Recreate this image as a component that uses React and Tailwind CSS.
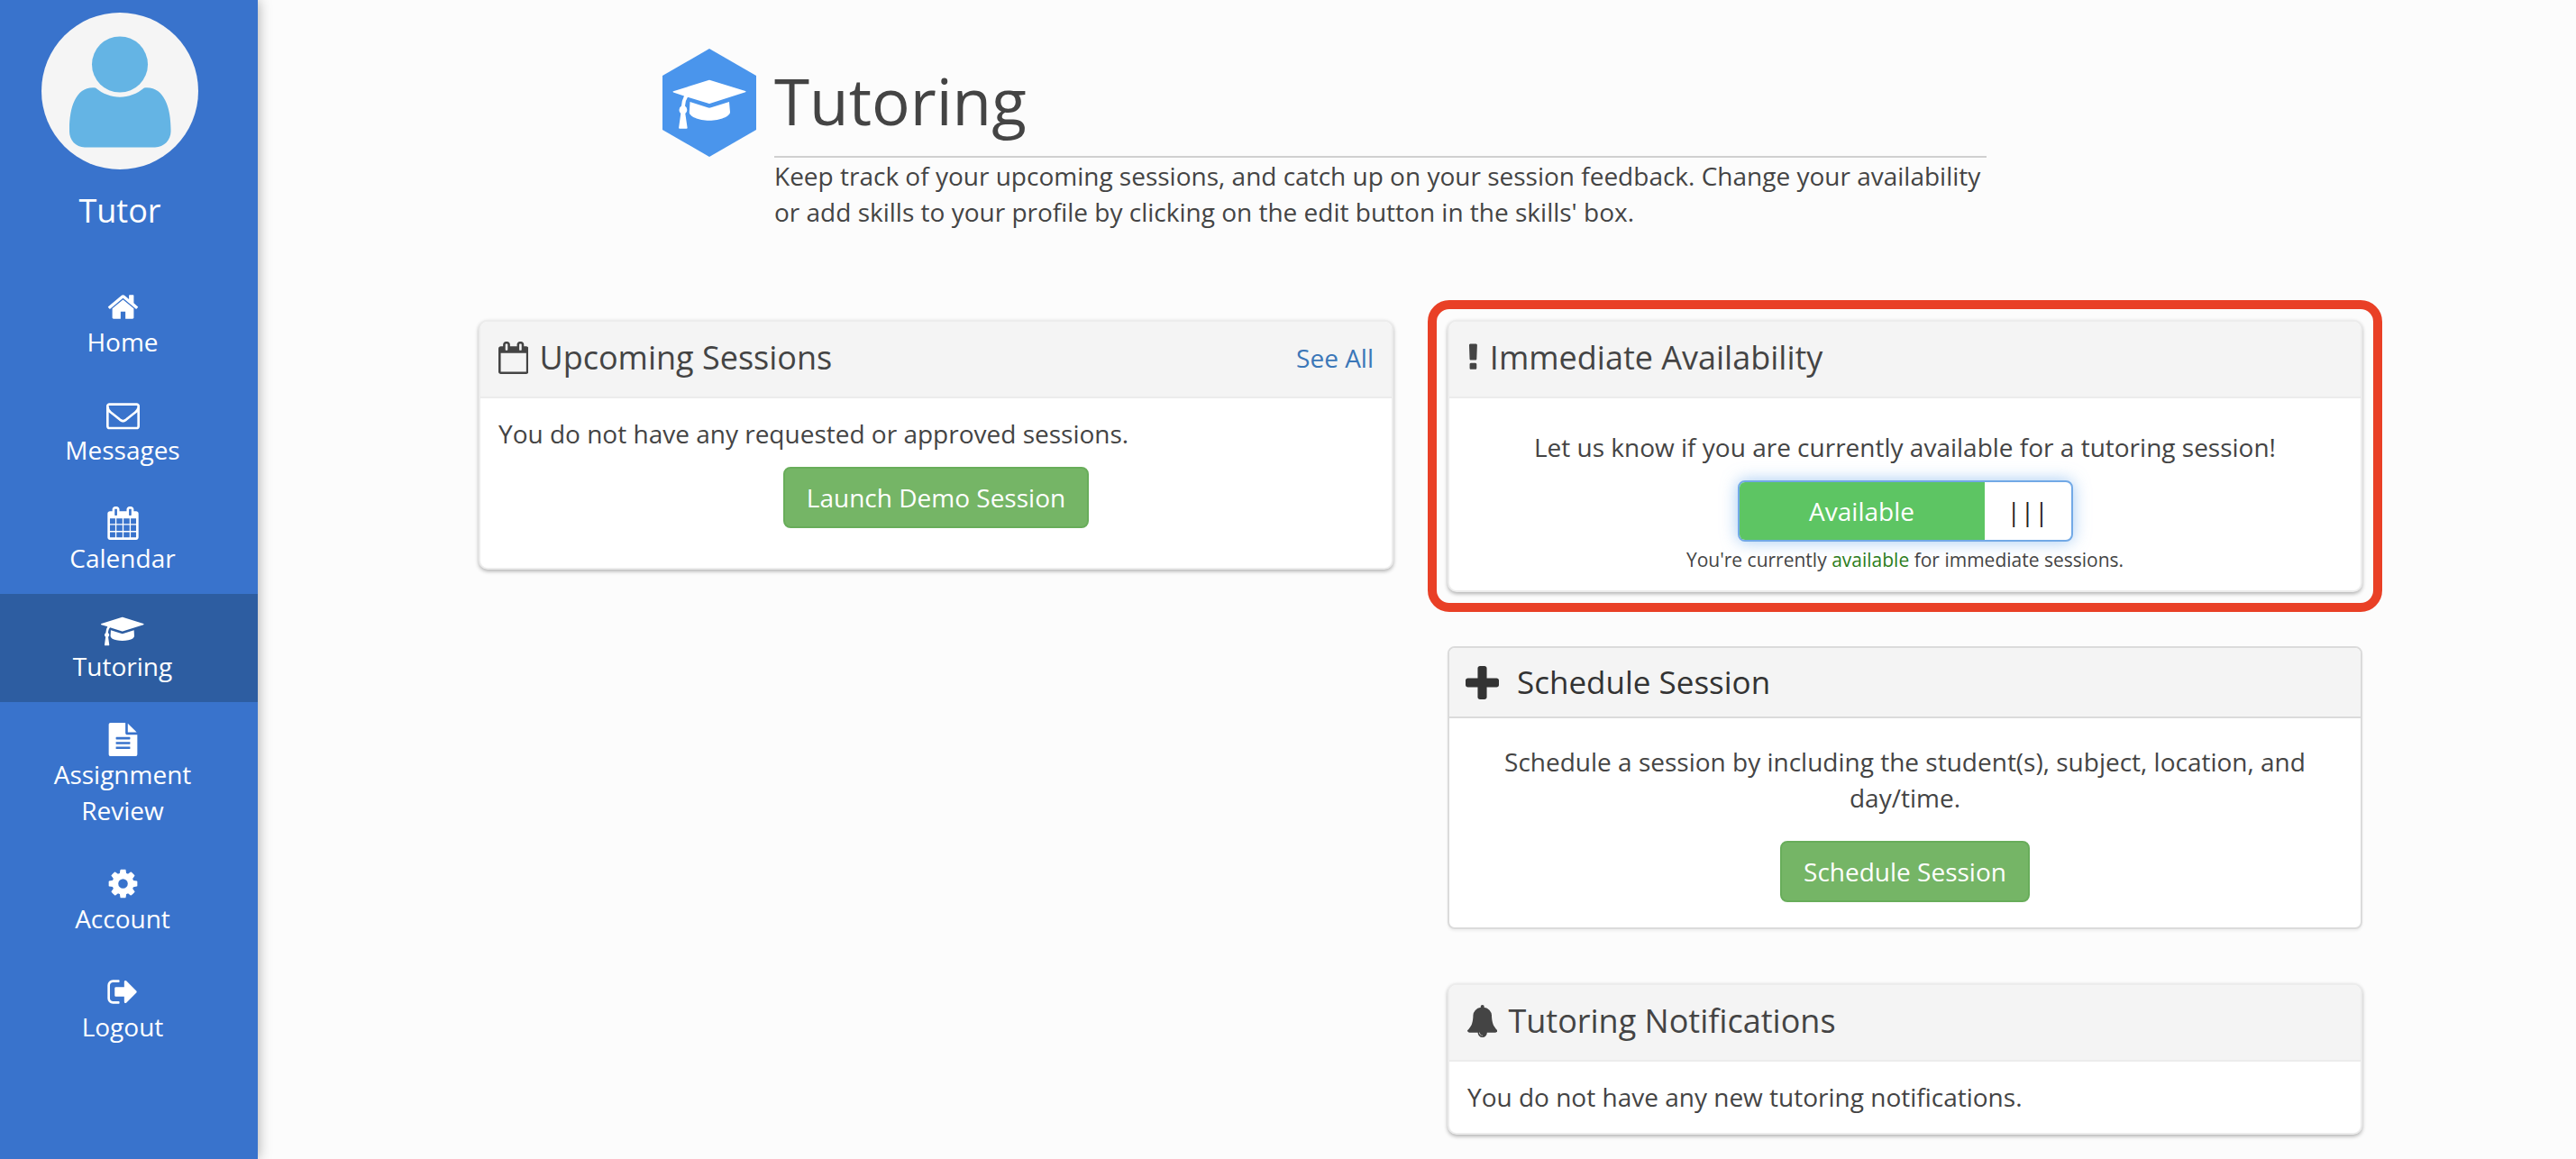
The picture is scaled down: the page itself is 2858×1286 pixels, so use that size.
import React, { useState } from "react";

const PATHS = {
  home: "M1472 992v480q0 26-19 45t-45 19h-384v-384h-256v384h-384q-26 0-45-19t-19-45v-480q0-1 .5-3t.5-3l575-474 575 474q1 2 1 6zm223-69l-62 74q-8 9-21 11h-3q-13 0-21-7l-692-577-692 577q-12 8-24 7-13-2-21-11l-62-74q-8-10-7-23.5t11-21.5l719-599q32-26 76-26t76 26l244 204v-195q0-14 9-23t23-9h192q14 0 23 9t9 23v408l219 182q10 8 11 21.5t-7 23.5z",
  envelope:
    "M1664 1504v-768q-32 36-69 66-268 206-426 338-51 43-83 67t-86.5 48.5-102.5 24.5h-2q-48 0-102.5-24.5t-86.5-48.5-83-67q-158-132-426-338-37-30-69-66v768q0 13 9.5 22.5t22.5 9.5h1472q13 0 22.5-9.5t9.5-22.5zm0-1051v-24.5l-.5-13-3-12.5-5.5-9-9-7.5-14-2.5h-1472q-13 0-22.5 9.5t-9.5 22.5q0 168 147 284 193 152 401 317 6 5 35 29.5t46 37.5 44.5 31.5 50.5 27.5 43 9h2q20 0 43-9t50.5-27.5 44.5-31.5 46-37.5 35-29.5q208-165 401-317 54-43 100.5-115.5t46.5-131.5zm128-37v1088q0 66-47 113t-113 47h-1472q-66 0-113-47t-47-113v-1088q0-66 47-113t113-47h1472q66 0 113 47t47 113z",
  calendar:
    "M192 1664h288v-288h-288v288zm352 0h320v-288h-320v288zm-352-352h288v-320h-288v320zm352 0h320v-320h-320v320zm-352-384h288v-288h-288v288zm736 736h320v-288h-320v288zm-384-736h320v-288h-320v288zm768 736h288v-288h-288v288zm-384-352h320v-320h-320v320zm-352-864v-288q0-13-9.5-22.5t-22.5-9.5h-64q-13 0-22.5 9.5t-9.5 22.5v288q0 13 9.5 22.5t22.5 9.5h64q13 0 22.5-9.5t9.5-22.5zm736 864h288v-320h-288v320zm-384-384h320v-288h-320v288zm384 0h288v-288h-288v288zm32-480v-288q0-13-9.5-22.5t-22.5-9.5h-64q-13 0-22.5 9.5t-9.5 22.5v288q0 13 9.5 22.5t22.5 9.5h64q13 0 22.5-9.5t9.5-22.5zm384-64v1280q0 52-38 90t-90 38h-1408q-52 0-90-38t-38-90v-1280q0-52 38-90t90-38h128v-96q0-66 47-113t113-47h64q66 0 113 47t47 113v96h384v-96q0-66 47-113t113-47h64q66 0 113 47t47 113v96h128q52 0 90 38t38 90z",
  calendarOpen:
    "M192 1664h1408v-1024h-1408v1024zm384-1216v-288q0-14-9-23t-23-9h-64q-14 0-23 9t-9 23v288q0 14 9 23t23 9h64q14 0 23-9t9-23zm768 0v-288q0-14-9-23t-23-9h-64q-14 0-23 9t-9 23v288q0 14 9 23t23 9h64q14 0 23-9t9-23zm384-64v1280q0 52-38 90t-90 38h-1408q-52 0-90-38t-38-90v-1280q0-52 38-90t90-38h128v-96q0-66 47-113t113-47h64q66 0 113 47t47 113v96h384v-96q0-66 47-113t113-47h64q66 0 113 47t47 113v96h128q52 0 90 38t38 90z",
  cap: "M1774 836l18 316q4 69-82 128t-235 93.5-323 34.5-323-34.5-235-93.5-82-128l18-316 574 181q22 7 48 7t48-7zm530-324q0 23-22 31l-1120 352q-4 1-10 1t-10-1l-652-206q-43 34-71 111.5t-34 178.5q63 36 63 109 0 69-58 107l58 433q2 14-8 25-9 11-24 11h-192q-15 0-24-11-10-11-8-25l58-433q-58-38-58-107 0-73 65-111 11-207 98-330l-333-104q-22-8-22-31t22-31l1120-352q4-1 10-1t10 1l1120 352q22 8 22 31z",
  file: "M1596 476q14 14 28 36h-472v-472q22 14 36 28zm-476 164h544v1056q0 40-28 68t-68 28h-1344q-40 0-68-28t-28-68v-1600q0-40 28-68t68-28h800v544q0 40 28 68t68 28zm160 736v-64q0-14-9-23t-23-9h-704q-14 0-23 9t-9 23v64q0 14 9 23t23 9h704q14 0 23-9t9-23zm0-256v-64q0-14-9-23t-23-9h-704q-14 0-23 9t-9 23v64q0 14 9 23t23 9h704q14 0 23-9t9-23zm0-256v-64q0-14-9-23t-23-9h-704q-14 0-23 9t-9 23v64q0 14 9 23t23 9h704q14 0 23-9t9-23z",
  cog: "M1152 896q0-106-75-181t-181-75-181 75-75 181 75 181 181 75 181-75 75-181zm512-109v222q0 12-8 23t-20 13l-185 28q-19 54-39 91 35 50 107 138 10 12 10 25t-9 23q-27 37-99 108t-94 71q-12 0-26-9l-138-108q-44 23-91 38-16 136-29 186-7 28-36 28h-222q-14 0-24.5-8.5t-11.5-21.5l-28-184q-49-16-90-37l-141 107q-10 9-25 9-14 0-25-11-126-114-165-168-7-10-7-23 0-12 8-23 15-21 51-66.5t54-70.5q-27-50-41-99l-183-27q-13-2-21-12.5t-8-23.5v-222q0-12 8-23t19-13l186-28q14-46 39-92-40-57-107-138-10-12-10-24 0-10 9-23 26-36 98.5-107.5t94.5-71.5q13 0 26 10l138 107q44-23 91-38 16-136 29-186 7-28 36-28h222q14 0 24.5 8.5t11.5 21.5l28 184q49 16 90 37l142-107q9-9 24-9 13 0 25 10 129 119 165 170 7 8 7 22 0 12-8 23-15 21-51 66.5t-54 70.5q26 50 41 98l183 28q13 2 21 12.5t8 23.5z",
  signOut:
    "M704 1440q0 4 1 20t.5 26.5-3 23.5-10 19.5-20.5 6.5h-320q-119 0-203.5-84.5t-84.5-203.5v-704q0-119 84.5-203.5t203.5-84.5h320q13 0 22.5 9.5t9.5 22.5q0 4 1 20t.5 26.5-3 23.5-10 19.5-20.5 6.5h-320q-66 0-113 47t-47 113v704q0 66 47 113t113 47h312l11.5 1 11.5 3 8 5.5 7 9 2 13.5zm928-544q0 26-19 45l-544 544q-19 19-45 19t-45-19-19-45v-288h-448q-26 0-45-19t-19-45v-384q0-26 19-45t45-19h448v-288q0-26 19-45t45-19 45 19l544 544q19 19 19 45z",
  plus: "M1600 736v192q0 40-28 68t-68 28h-416v416q0 40-28 68t-68 28h-192q-40 0-68-28t-28-68v-416h-416q-40 0-68-28t-28-68v-192q0-40 28-68t68-28h416v-416q0-40 28-68t68-28h192q40 0 68 28t28 68v416h416q40 0 68 28t28 68z",
  exclamation:
    "M1088 1248v224q0 26-19 45t-45 19h-256q-26 0-45-19t-19-45v-224q0-26 19-45t45-19h256q26 0 45 19t19 45zm30-1056l-28 768q-1 26-20.5 45t-45.5 19h-256q-26 0-45.5-19t-20.5-45l-28-768q-1-26 17.5-45t44.5-19h320q26 0 44.5 19t17.5 45z",
  bell: "M912 1696q0-16-16-16-59 0-101.5-42.5t-42.5-101.5q0-16-16-16t-16 16q0 73 51.5 124.5t124.5 51.5q16 0 16-16zm816-288q0 52-38 90t-90 38h-448q0 106-75 181t-181 75-181-75-75-181h-448q-52 0-90-38t-38-90q50-42 91-88t85-119.5 74.5-158.5 50-206 19.5-260q0-152 117-282.5t307-158.5q-8-19-8-39 0-40 28-68t68-28 68 28 28 68q0 20-8 39 190 28 307 158.5t117 282.5q0 139 19.5 260t50 206 74.5 158.5 85 119.5 91 88z",
};

function Icon({ name, viewBox = "0 0 1792 1792", className }) {
  return (
    <svg viewBox={viewBox} className={className} fill="currentColor" aria-hidden="true">
      <path d={PATHS[name]} />
    </svg>
  );
}

const NAV = [
  { label: "Home", icon: "home" },
  { label: "Messages", icon: "envelope" },
  { label: "Calendar", icon: "calendar" },
  { label: "Tutoring", icon: "cap", viewBox: "0 0 2304 1792", active: true },
  { label: "Assignment Review", icon: "file" },
  { label: "Account", icon: "cog" },
  { label: "Logout", icon: "signOut" },
];

function Avatar() {
  return (
    <svg viewBox="0 0 174 174" className="size-[174px]" role="img" aria-label="Tutor avatar">
      <circle cx="87" cy="87" r="87" fill="#f5f5f5" />
      <circle cx="87" cy="57.5" r="31" fill="#64b4e4" />
      <path
        d="M60 83.5C76 97 98 97 114 83.5C135 81 143.500 104 143.500 129V132C143.500 141 136 149.500 126 149.500H48C38 149.500 31 141 31 132V129C31 104 39 81 60 83.500Z"
        fill="#64b4e4"
      />
    </svg>
  );
}

function Sidebar() {
  return (
    <aside className="z-10 w-[286px] shrink-0 bg-[#3973cc] text-white shadow-[0_0_14px_rgba(0,0,0,0.35)]">
      <div className="flex flex-col items-center pt-3.5 pr-5">
        <Avatar />
        <p className="mt-[26px] text-[36px] leading-10">Tutor</p>
      </div>
      <nav className="mt-[45px]">
        {NAV.map((item) => (
          <a
            key={item.label}
            href="#"
            aria-current={item.active ? "page" : undefined}
            className={
              item.active
                ? "flex flex-col items-center bg-[#2d5da1] py-5 pr-[54px] pl-10 text-center"
                : "flex flex-col items-center py-5 pr-[54px] pl-10 text-center"
            }
          >
            <span className="flex h-10 items-end">
              <Icon name={item.icon} viewBox={item.viewBox} className="h-[37px] w-auto" />
            </span>
            <span className="leading-10">{item.label}</span>
          </a>
        ))}
      </nav>
    </aside>
  );
}

function Hexagon() {
  return (
    <svg viewBox="0 0 104 120" className="h-[120px] w-[104px] shrink-0" aria-hidden="true">
      <path d="M52 0L104 30V90L52 120L0 90V30Z" fill="#4a95ec" />
      <g fill="#fff">
        <path d="M51 35Q52 34.500 53 35L92 47Q93 47.700 92 48.300L53 60.800Q52 61.200 51 60.800L28 53.700Q25.300 57.500 25 63.500Q27.300 65.200 27.300 68Q27.300 70.600 25.300 72L27.600 87.800Q27.700 88.800 26.700 88.800H19Q18 88.800 18.100 87.800L20.300 72Q18.500 70.600 18.500 68Q18.500 65 21 63.500Q21.500 57 24 52.400L12 48.500Q11 47.800 12 47.200Z" />
        <path d="M30.500 59L50 65.300Q52 66 54 65.300L74 59L75 70.500C75 75 64 79.800 52 79.800C40 79.800 29.500 75 29.800 70.500Z" />
      </g>
    </svg>
  );
}

function Panel({ title, icon, action, children }) {
  return (
    <section className="overflow-hidden rounded-[10px] border-2 border-[#ececec] bg-white shadow-[0_2px_4px_rgba(0,0,0,0.3)]">
      <header className="flex items-center justify-between border-b-2 border-[#ececec] bg-[#f4f4f4] px-5 pt-5 pb-[23px]">
        <h2 className="flex items-center gap-3 text-[36px] leading-10">
          {icon}
          {title}
        </h2>
        {action}
      </header>
      {children}
    </section>
  );
}

function ActionButton({ children }) {
  return (
    <button
      type="button"
      className="rounded-lg border-2 border-[#68ad5a] bg-[#75b566] px-6 py-3 leading-10 text-white"
    >
      {children}
    </button>
  );
}

function AvailabilityToggle({ on, onToggle }) {
  return (
    <button
      type="button"
      role="switch"
      aria-checked={on}
      aria-label="Immediate availability"
      onClick={onToggle}
      className="flex h-[68px] w-[372px] overflow-hidden rounded-lg border-2 border-[#72a9e6] bg-white leading-[64px] shadow-[0_0_18px_rgba(100,165,235,0.6)]"
    >
      <span className="flex-1 bg-[#5dc563] text-center text-white">
        {on ? "Available" : "Unavailable"}
      </span>
      <span className="w-24 text-center text-[#222]">|||</span>
    </button>
  );
}

export default function App() {
  const [available, setAvailable] = useState(true);
  return (
    <div className="flex min-h-screen bg-[#fcfcfc] font-['Open_Sans',sans-serif] text-[28px] leading-10 text-[#444]">
      <Sidebar />
      <main className="min-w-0 flex-1 pr-[237px] pl-[245px]">
        <header className="flex items-start gap-5 pt-[54px] pr-[417px] pl-[204px]">
          <Hexagon />
          <div className="flex-1">
            <h1 className="border-b-2 border-[#d0d0d0] pb-1 text-[71px] leading-[115px]">Tutoring</h1>
            <p>
              Keep track of your upcoming sessions, and catch up on your session feedback. Change
              your availability or add skills to your profile by clicking on the edit button in the
              skills' box.
            </p>
          </div>
        </header>

        <div className="mt-25 grid grid-cols-2 items-start gap-15">
          <Panel
            title="Upcoming Sessions"
            icon={<Icon name="calendarOpen" viewBox="64 0 1664 1792" className="h-9 w-auto" />}
            action={
              <a href="#" className="text-[#3b77b8]">
                See All
              </a>
            }
          >
            <div className="px-5 pt-[19px] pb-11">
              <p>You do not have any requested or approved sessions.</p>
              <div className="mt-[17px] flex justify-center">
                <ActionButton>Launch Demo Session</ActionButton>
              </div>
            </div>
          </Panel>

          <div className="flex flex-col gap-15">
            <div className="relative">
              <Panel
                title="Immediate Availability"
                icon={<Icon name="exclamation" viewBox="576 0 640 1792" className="h-9 w-auto" />}
              >
                <div className="flex flex-col items-center px-5 pt-[34px] pb-3.5 text-center">
                  <p>Let us know if you are currently available for a tutoring session!</p>
                  <div className="mt-[17px]">
                    <AvailabilityToggle on={available} onToggle={() => setAvailable(!available)} />
                  </div>
                  <p className="text-[21px]">
                    You're currently{" "}
                    <span className="text-[#2b7d1c]">{available ? "available" : "unavailable"}</span>{" "}
                    for immediate sessions.
                  </p>
                </div>
              </Panel>
              <div className="pointer-events-none absolute -inset-[22px] rounded-3xl border-10 border-[#e94026]" />
            </div>

            <section className="overflow-hidden rounded-lg border-2 border-[#dbdbdb] bg-white shadow-[0_2px_3px_rgba(0,0,0,0.06)]">
              <header className="border-b-2 border-[#dbdbdb] bg-[#f4f4f4] px-[18px] py-[18px]">
                <h2 className="flex items-center gap-5 text-[35px] leading-10 text-[#333]">
                  <Icon name="plus" viewBox="192 128 1408 1408" className="size-[37px]" />
                  Schedule Session
                </h2>
              </header>
              <div className="px-10 py-7 text-center">
                <p>
                  Schedule a session by including the student(s), subject, location, and day/time.
                </p>
                <div className="mt-7 flex justify-center">
                  <ActionButton>Schedule Session</ActionButton>
                </div>
              </div>
            </section>

            <Panel
              title="Tutoring Notifications"
              icon={<Icon name="bell" viewBox="64 0 1664 1792" className="h-9 w-auto" />}
            >
              <p className="px-5 pt-[19px] pb-5">You do not have any new tutoring notifications.</p>
            </Panel>
          </div>
        </div>
      </main>
    </div>
  );
}
